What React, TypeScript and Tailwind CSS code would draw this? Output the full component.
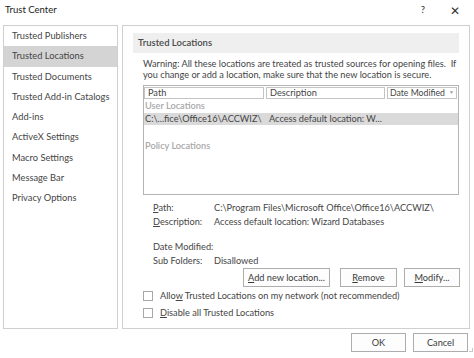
import React from "react";

const navItems = [
  "Trusted Publishers",
  "Trusted Locations",
  "Trusted Documents",
  "Trusted Add-in Catalogs",
  "Add-ins",
  "ActiveX Settings",
  "Macro Settings",
  "Message Bar",
  "Privacy Options",
];

function Btn({ children, className }: { children: React.ReactNode; className: string }) {
  return (
    <div
      className={`h-[19px] flex items-center justify-center border border-[#adadad] bg-[#fdfdfd] text-[9.2px] text-[#3a3a3a] ${className}`}
    >
      {children}
    </div>
  );
}

export default function App() {
  return (
    <div
      className="w-[474px] h-[358px] bg-white text-[#454545] flex flex-col overflow-hidden"
      style={{ fontFamily: "Lato, 'Noto Sans', sans-serif" }}
    >
      {/* title bar */}
      <div className="h-[21px] flex items-center pl-[5px] pr-[14px] text-[9.5px] text-[#222]">
        <span>Trust Center</span>
        <span className="ml-auto mr-[25px] text-[9.5px] text-[#333]">?</span>
        <span className="text-[12px] leading-none font-light text-[#333]">✕</span>
      </div>

      <div className="flex mt-[4px] h-[304px] pl-[3px]">
        {/* left nav */}
        <div className="w-[115px] border border-[#cfcfcf] flex flex-col">
          {navItems.map((n) => (
            <div
              key={n}
              className={`h-[20.25px] flex items-center pl-[8px] text-[9.3px] ${
                n === "Trusted Locations" ? "bg-[#d4d4d4]" : ""
              }`}
            >
              {n}
            </div>
          ))}
        </div>

        {/* right panel */}
        <div className="ml-[4px] w-[348px] border border-[#cfcfcf] pt-[7px] px-[10px] flex flex-col">
          <div className="h-[20px] bg-[#efefef] flex items-center pl-[5px] text-[9.5px] font-semibold text-[#4a4a4a]">
            Trusted Locations
          </div>

          <div className="pl-[10px] flex flex-col text-[9.2px]">
            <div className="mt-[5px] leading-[11px] whitespace-nowrap">
              Warning: All these locations are treated as trusted sources for opening files.&nbsp; If
              <br />
              you change or add a location, make sure that the new location is secure.
            </div>

            {/* table */}
            <div className="mt-[5px] w-[316px] h-[110px] border border-[#b4b4b4] flex flex-col">
              <div className="flex h-[12px] mt-[1px] gap-[2px] pr-[1px]">
                <div className="w-[120px] border border-[#c4c4c4] flex items-center pl-[3px]">Path</div>
                <div className="w-[119px] border border-[#c4c4c4] flex items-center pl-[3px]">Description</div>
                <div className="w-[70px] border border-[#c4c4c4] flex items-center pl-[2px] whitespace-nowrap text-[8.7px]">
                  Date Modified
                  <span className="ml-auto mr-[2px] text-[5px] text-[#999]">▼</span>
                </div>
              </div>
              <div className="h-[14px] flex items-center pl-[1px] text-[#a8a8a8] font-semibold">
                User Locations
              </div>
              <div className="h-[12px] flex items-center bg-[#dadada] pl-[1px] whitespace-nowrap">
                <span className="w-[124px]">C:\...fice\Office16\ACCWIZ\</span>
                <span>Access default location: W...</span>
              </div>
              <div className="h-[15px]" />
              <div className="h-[12px] flex items-center pl-[1px] text-[#a8a8a8] font-semibold">
                Policy Locations
              </div>
            </div>

            {/* details */}
            <div className="mt-[6px] pl-[10px] leading-[14px] flex flex-col whitespace-nowrap">
              <div className="flex">
                <span className="w-[61px]">
                  <u>P</u>ath:
                </span>
                <span>C:\Program Files\Microsoft Office\Office16\ACCWIZ\</span>
              </div>
              <div className="flex">
                <span className="w-[61px]">
                  <u>D</u>escription:
                </span>
                <span>Access default location: Wizard Databases</span>
              </div>
              <div className="h-[11px]" />
              <div className="flex">
                <span className="w-[61px]">Date Modified:</span>
              </div>
              <div className="flex">
                <span className="w-[61px]">Sub Folders:</span>
                <span>Disallowed</span>
              </div>
            </div>

            <div className="flex justify-end mt-[0px] mr-[-1px]">
              <Btn className="w-[87px]">
                <span>
                  <u>A</u>dd new location...
                </span>
              </Btn>
              <Btn className="w-[57px] ml-[10px]">
                <span>
                  <u>R</u>emove
                </span>
              </Btn>
              <Btn className="w-[56px] ml-[7px]">
                <span>
                  <u>M</u>odify...
                </span>
              </Btn>
            </div>

            <div className="mt-[4px] flex items-center h-[10px]">
              <div className="w-[10px] h-[10px] border border-[#a8a8a8] bg-white" />
              <span className="ml-[7px]">
                Allo<u>w</u> Trusted Locations on my network (not recommended)
              </span>
            </div>
            <div className="mt-[7px] flex items-center h-[10px]">
              <div className="w-[10px] h-[10px] border border-[#a8a8a8] bg-white" />
              <span className="ml-[7px]">
                <u>D</u>isable all Trusted Locations
              </span>
            </div>
          </div>
        </div>
      </div>

      {/* footer */}
      <div className="flex justify-end mt-[4px] pr-[6px] relative">
        <Btn className="w-[55px]">OK</Btn>
        <Btn className="w-[55px] ml-[7px]">Cancel</Btn>
        <div className="absolute right-[1px] top-[15px] w-[4px] h-[4px] border-r border-b border-[#c8c8c8]" />
      </div>
    </div>
  );
}
